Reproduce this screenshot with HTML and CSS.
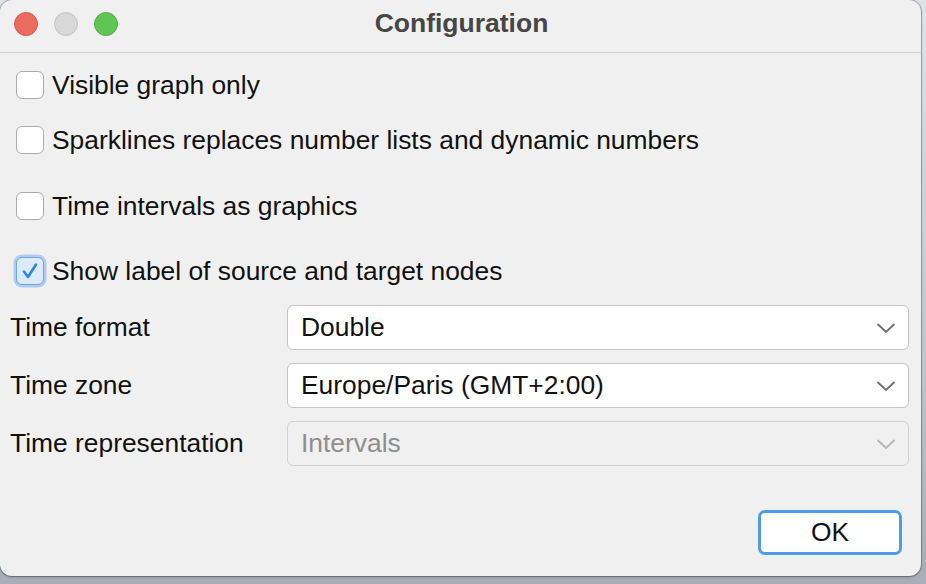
FILE: index.html
```html
<!DOCTYPE html>
<html lang="en">
<head>
<meta charset="utf-8">
<title>Configuration</title>
<link rel="stylesheet" href="styles.css">
</head>
<body>
<div class="window">
  <div class="titlebar">
    <div class="lights">
      <span class="light red"></span>
      <span class="light gray"></span>
      <span class="light green"></span>
    </div>
    <div class="title">Configuration</div>
    <div></div>
  </div>
  <div class="content">
    <label class="check-row r1"><span class="box"></span><span>Visible graph only</span></label>
    <label class="check-row r2"><span class="box"></span><span>Sparklines replaces number lists and dynamic numbers</span></label>
    <label class="check-row r3"><span class="box"></span><span>Time intervals as graphics</span></label>
    <label class="check-row r4"><span class="box checked"><svg viewBox="0 0 28 28" width="28" height="28"><path d="M8 14.5 L12 20 L20 7.5" fill="none" stroke="#2f86e8" stroke-width="2.6" stroke-linecap="round" stroke-linejoin="round"/></svg></span><span>Show label of source and target nodes</span></label>

    <div class="form">
      <div class="label">Time format</div>
      <div class="select"><span>Double</span><svg class="chev" viewBox="0 0 20 10" width="20" height="10"><polyline points="1.5,1 10,9 18.5,1" fill="none" stroke="#6e6e6e" stroke-width="1.8"/></svg></div>
      <div class="label">Time zone</div>
      <div class="select"><span>Europe/Paris (GMT+2:00)</span><svg class="chev" viewBox="0 0 20 10" width="20" height="10"><polyline points="1.5,1 10,9 18.5,1" fill="none" stroke="#6e6e6e" stroke-width="1.8"/></svg></div>
      <div class="label">Time representation</div>
      <div class="select disabled"><span>Intervals</span><svg class="chev" viewBox="0 0 20 10" width="20" height="10"><polyline points="1.5,1 10,9 18.5,1" fill="none" stroke="#b5b5b5" stroke-width="1.8"/></svg></div>
    </div>

    <div class="actions">
      <button class="ok">OK</button>
    </div>
  </div>
</div>
</body>
</html>
```
FILE: styles.css
```css
html, body {
  margin: 0;
  padding: 0;
}
body {
  width: 926px;
  height: 584px;
  background: linear-gradient(180deg, #dfe3ea 0%, #c3c7d0 60%, #a9adb7 100%);
  font-family: "Liberation Sans", Arial, sans-serif;
  overflow: hidden;
}
.window {
  width: 921px;
  height: 576px;
  background: #f0f0f0;
  border-radius: 12px;
  box-shadow: 0 0 0 1px rgba(0,0,0,0.22), 0 1px 3px rgba(0,0,0,0.25);
  overflow: hidden;
  display: flex;
  flex-direction: column;
}
.titlebar {
  height: 52px;
  border-bottom: 1.5px solid #d2d2d2;
  display: grid;
  grid-template-columns: 1fr auto 1fr;
  align-items: center;
  flex-shrink: 0;
}
.lights {
  display: flex;
  gap: 16px;
  padding-left: 14px;
  padding-bottom: 4px;
}
.light {
  width: 24px;
  height: 24px;
  border-radius: 50%;
  box-sizing: border-box;
}
.red { background: #ed6a5e; border: 1px solid #d9574c; }
.gray { background: #d8d8d8; border: 1px solid #c4c4c4; }
.green { background: #61c554; border: 1px solid #51ad45; }
.title {
  font-weight: bold;
  font-size: 26.5px;
  color: #464646;
  padding-bottom: 6px;
  padding-left: 2px;
}
.content {
  padding: 17px 12px 0 10px;
  display: flex;
  flex-direction: column;
}
.check-row {
  display: flex;
  align-items: center;
  gap: 8px;
  margin-left: 6px;
  height: 28px;
  font-size: 26.4px;
  color: #111;
}
.r1 { padding-top: 1px; }
.r2 { margin-top: 27px; }
.r3 { margin-top: 38px; }
.r4 { margin-top: 37px; }
.box {
  width: 28px;
  height: 28px;
  box-sizing: border-box;
  border: 1.5px solid #ababab;
  border-radius: 6px;
  background: #fff;
  display: flex;
  align-items: center;
  justify-content: center;
  flex-shrink: 0;
  overflow: visible;
}
.box.checked {
  background: #dceafc;
  border-color: #6aa6ea;
  box-shadow: 0 0 0 2.5px rgba(100, 160, 235, 0.45);
}
.box svg {
  flex-shrink: 0;
}
.form {
  margin-top: 20px;
  display: grid;
  grid-template-columns: 277px 1fr;
  row-gap: 13px;
  align-items: center;
}
.label {
  font-size: 26.4px;
  color: #111;
}
.select {
  height: 45px;
  box-sizing: border-box;
  border: 1.5px solid #c4c4c4;
  border-radius: 6px;
  background: #fff;
  display: flex;
  align-items: center;
  justify-content: space-between;
  padding: 0 12px 0 13px;
  font-size: 26.4px;
  color: #111;
}
.select.disabled {
  background: #f0f0f0;
  border-color: #d2d2d2;
  color: #8e8e8e;
}
.chev {
  display: block;
}
.actions {
  display: flex;
  justify-content: flex-end;
  margin-top: 44px;
  padding-right: 7px;
}
.ok {
  width: 144px;
  height: 45px;
  box-sizing: border-box;
  border: 3px solid #4d9de6;
  border-radius: 7px;
  background: #fff;
  font-family: "Liberation Sans", Arial, sans-serif;
  font-size: 26.4px;
  color: #111;
  padding: 0;
}
```
